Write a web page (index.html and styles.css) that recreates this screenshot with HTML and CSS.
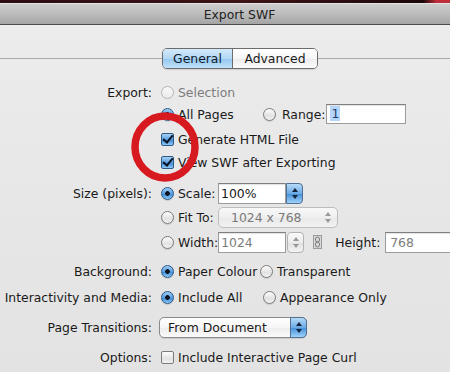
FILE: index.html
```html
<!DOCTYPE html>
<html lang="en">
<head>
  <meta charset="UTF-8">
  <title>Export SWF</title>
  <link rel="stylesheet" href="styles.css">
</head>
<body>
  <div class="topstrip"></div>
  <div class="titlebar">Export SWF</div>

  <div class="sheet">
    <div class="tabbar">
      <div class="seg">
        <span class="seg-item on">General</span>
        <span class="seg-item adv">Advanced</span>
      </div>
    </div>

    <div class="form">
      <!-- export -->
      <div class="row">
        <span class="lbl">Export:</span>
        <div class="ctl"><span class="radio dis"></span><span class="muted">Selection</span></div>
      </div>
      <div class="row">
        <span class="lbl"></span>
        <div class="ctl">
          <span class="opt w102"><span class="radio on"></span>All Pages</span>
          <span class="radio"></span><span class="range-lbl">Range:</span>
          <span class="field range"><span class="sel">1</span></span>
        </div>
      </div>
      <div class="row sp3">
        <span class="lbl"></span>
        <div class="ctl"><span class="check on"></span>Generate HTML File</div>
      </div>
      <div class="row sp1">
        <span class="lbl"></span>
        <div class="ctl"><span class="check on"></span>View SWF after Exporting</div>
      </div>

      <!-- size -->
      <div class="row sp9">
        <span class="lbl">Size (pixels):</span>
        <div class="ctl">
          <span class="radio on"></span><span class="sublbl">Scale:</span>
          <span class="combo">
            <span class="field scale">100%</span>
            <span class="step blue"></span>
          </span>
        </div>
      </div>
      <div class="row sp2">
        <span class="lbl"></span>
        <div class="ctl">
          <span class="radio"></span><span class="sublbl">Fit To:</span>
          <span class="popup dis fit">1024 x 768<span class="arrows"></span></span>
        </div>
      </div>
      <div class="row sp3">
        <span class="lbl"></span>
        <div class="ctl">
          <span class="radio"></span><span class="sublbl">Width:</span>
          <span class="combo">
            <span class="field scale muted">1024</span>
            <span class="step grey"></span>
          </span>
          <svg class="chain" width="9" height="14" viewBox="0 0 9 14">
            <rect x="0.5" y="0.5" width="8" height="13" fill="#d8d8d8" stroke="#9a9a9a"/>
            <rect x="2.5" y="2" width="4" height="5" rx="2" fill="none" stroke="#7c7c7c"/>
            <rect x="2.5" y="7" width="4" height="5" rx="2" fill="none" stroke="#7c7c7c"/>
          </svg>
          <span class="height-lbl">Height:</span>
          <span class="field height muted">768</span>
        </div>
      </div>

      <!-- background -->
      <div class="row sp7">
        <span class="lbl">Background:</span>
        <div class="ctl">
          <span class="opt w99"><span class="radio on"></span>Paper Colour</span>
          <span class="radio"></span>Transparent
        </div>
      </div>

      <div class="row sp4">
        <span class="lbl">Interactivity and Media:</span>
        <div class="ctl">
          <span class="opt w102"><span class="radio on"></span>Include All</span>
          <span class="radio"></span>Appearance Only
        </div>
      </div>

      <div class="row sp8">
        <span class="lbl">Page Transitions:</span>
        <div class="ctl">
          <span class="popup trans">From Document<span class="step blue"></span></span>
        </div>
      </div>

      <div class="row sp8">
        <span class="lbl">Options:</span>
        <div class="ctl"><span class="check"></span>Include Interactive Page Curl</div>
      </div>
    </div>
  </div>

  <svg class="mark" width="450" height="372" viewBox="0 0 450 372">
    <ellipse cx="165" cy="147" rx="30" ry="31" fill="none" stroke="#d71920" stroke-width="7.5"/>
  </svg>
</body>
</html>
```

FILE: styles.css
```css
body {
  margin: 0;
  width: 450px;
  height: 372px;
  overflow: hidden;
  position: relative;
  background: #e8e8e8;
  font-family: "DejaVu Sans", "Liberation Sans", sans-serif;
  font-size: 12.4px;
  color: #1a1a1a;
}
.topstrip {
  height: 3px;
  background: linear-gradient(90deg, #2c0c10, #3d1418 55%, #1c0808 94%, #c02c3a 97%);
  border-bottom: 1px solid #e4e4e4;
}
.titlebar {
  height: 20px;
  line-height: 21px;
  padding-left: 29px;
  text-align: center;
  color: #222;
  background: linear-gradient(#cdcdcd, #bcbcbc 50%, #a4a4a4);
  border-bottom: 1px solid #4a4a4a;
}
.sheet {
  background: linear-gradient(#ececec, #e6e6e6 60%, #e3e3e3);
  height: 347px;
}
.tabbar {
  display: flex;
  align-items: center;
  padding-top: 23px;
  height: 21px;
}
.tabbar::before {
  content: "";
  width: 162px;
  height: 1px;
  background: #a8a8a8;
}
.tabbar::after {
  content: "";
  flex: 1;
  height: 1px;
  background: #a8a8a8;
}
.seg {
  display: flex;
  height: 21px;
  box-sizing: border-box;
  border: 1px solid #6c6c6c;
  border-radius: 5px;
  overflow: hidden;
  box-shadow: 0 1px 1px rgba(0,0,0,0.12);
}
.seg-item {
  line-height: 19px;
  text-align: center;
  width: 84px;
  background: linear-gradient(#ffffff, #f6f6f6 50%, #ececec 51%, #fbfbfb);
}
.seg-item.on {
  width: 69px;
  border-right: 1px solid #6c6c6c;
  background: linear-gradient(#d3e9fa, #b2d7f4 50%, #93c6ef 51%, #c0e2f9);
  color: #0f1a28;
}
.form {
  padding-top: 12px;
}
.row {
  display: grid;
  grid-template-columns: 152px 1fr;
  column-gap: 9px;
  height: 22px;
  align-items: center;
}
.sp1 { margin-top: 1px; }
.sp2 { margin-top: 2px; }
.sp3 { margin-top: 3px; }
.sp4 { margin-top: 4px; }
.sp7 { margin-top: 7px; }
.sp8 { margin-top: 8px; }
.sp9 { margin-top: 9px; }
.lbl {
  text-align: right;
  white-space: nowrap;
}
.ctl {
  display: flex;
  align-items: center;
  white-space: nowrap;
}
.opt {
  display: flex;
  align-items: center;
  flex: none;
}
.w102 { width: 102px; }
.w99 { width: 99px; }
.muted { color: #7c7c7c; }
.radio {
  flex: none;
  width: 13px;
  height: 13px;
  box-sizing: border-box;
  border-radius: 50%;
  border: 1px solid #7b7b7b;
  background: linear-gradient(#fdfdfd, #e2e2e2 60%, #f2f2f2);
  box-shadow: 0 1px 1px rgba(0,0,0,0.12);
  margin-right: 4px;
}
.radio.on {
  border-color: #2c5a8a;
  background: radial-gradient(circle, #0d1420 0 2px, transparent 2.6px),
              linear-gradient(#9fcdf3, #5a9fe0 50%, #3d88d6 55%, #8cc8f6);
}
.radio.dis {
  border-color: #b4b4b4;
  background: linear-gradient(#f7f7f7, #ececec);
  box-shadow: none;
}
.check {
  flex: none;
  width: 13px;
  height: 13px;
  box-sizing: border-box;
  border: 1px solid #7b7b7b;
  border-radius: 2px;
  background: linear-gradient(#fdfdfd, #e2e2e2 60%, #f2f2f2);
  margin-right: 4px;
  position: relative;
}
.check.on {
  border-color: #2c5a8a;
  background: linear-gradient(#a6d1f4, #5d9fe0 50%, #3f88d6 55%, #8fc9f6);
}
.check.on::after {
  content: "";
  position: absolute;
  left: 3px;
  top: -1px;
  width: 4px;
  height: 8px;
  border-right: 2px solid #0b1422;
  border-bottom: 2px solid #0b1422;
  transform: rotate(40deg);
}
.range-lbl {
  flex: none;
  margin: 0 1px 0 2px;
}
.field {
  display: inline-block;
  flex: none;
  height: 20px;
  box-sizing: border-box;
  border: 1px solid #9c9c9c;
  border-top-color: #7f7f7f;
  background: #fff;
  line-height: 18px;
  padding-left: 3px;
  box-shadow: inset 0 1px 1px rgba(0,0,0,0.12);
}
.field.range { width: 80px; }
.sel {
  background: #b5d5fb;
  color: #1d3d6a;
  padding: 0 1px;
}
.sublbl {
  flex: none;
  min-width: 40px;
}
.combo {
  display: flex;
  align-items: center;
}
.field.scale {
  width: 68px;
  padding-left: 2px;
  height: 21px;
  line-height: 19px;
}
.step {
  width: 17px;
  height: 21px;
  box-sizing: border-box;
  border: 1px solid #4f6f93;
  border-radius: 0 4px 4px 0;
  position: relative;
  flex: none;
}
.step.blue {
  background: linear-gradient(#b8dbf8, #6aaae6 50%, #4a93dc 55%, #9fd2fa);
}
.step.grey {
  border-color: #b2b2b2;
  border-radius: 4px;
  margin-left: 1px;
  background: linear-gradient(#fafafa, #ececec 50%, #e2e2e2 55%, #f4f4f4);
}
.step::before,
.arrows::before {
  content: "";
  position: absolute;
  left: 50%;
  top: 4px;
  margin-left: -3px;
  border-left: 3px solid transparent;
  border-right: 3px solid transparent;
  border-bottom: 4px solid #16243a;
}
.step::after,
.arrows::after {
  content: "";
  position: absolute;
  left: 50%;
  bottom: 4px;
  margin-left: -3px;
  border-left: 3px solid transparent;
  border-right: 3px solid transparent;
  border-top: 4px solid #16243a;
}
.step.grey::before,
.arrows::before { border-bottom-color: #9a9a9a; }
.step.grey::after,
.arrows::after { border-top-color: #9a9a9a; }
.popup {
  display: flex;
  align-items: center;
  height: 21px;
  box-sizing: border-box;
  border: 1px solid #8a8a8a;
  border-radius: 5px;
  background: linear-gradient(#ffffff, #f6f6f6 50%, #ececec 51%, #fafafa);
  position: relative;
  box-shadow: 0 1px 1px rgba(0,0,0,0.1);
}
.popup.fit {
  width: 120px;
  padding-left: 12px;
  color: #7a7a7a;
  border-color: #bdbdbd;
  box-shadow: none;
  background: linear-gradient(#f8f8f8, #efefef 50%, #e8e8e8 51%, #f2f2f2);
}
.arrows {
  position: absolute;
  right: 1px;
  top: 0;
  width: 17px;
  height: 19px;
}
.popup.trans {
  width: 148px;
  margin-left: -2px;
  padding-left: 8px;
  justify-content: space-between;
}
.popup.trans .step {
  height: 21px;
  margin-right: -1px;
  border-radius: 0 5px 5px 0;
}
.chain {
  margin-left: 9px;
  flex: none;
}
.height-lbl {
  margin-left: 13px;
  width: 50px;
}
.field.height {
  width: 80px;
  height: 21px;
  line-height: 19px;
  padding-left: 4px;
}
.mark {
  position: absolute;
  left: 0;
  top: 0;
  pointer-events: none;
}
```
